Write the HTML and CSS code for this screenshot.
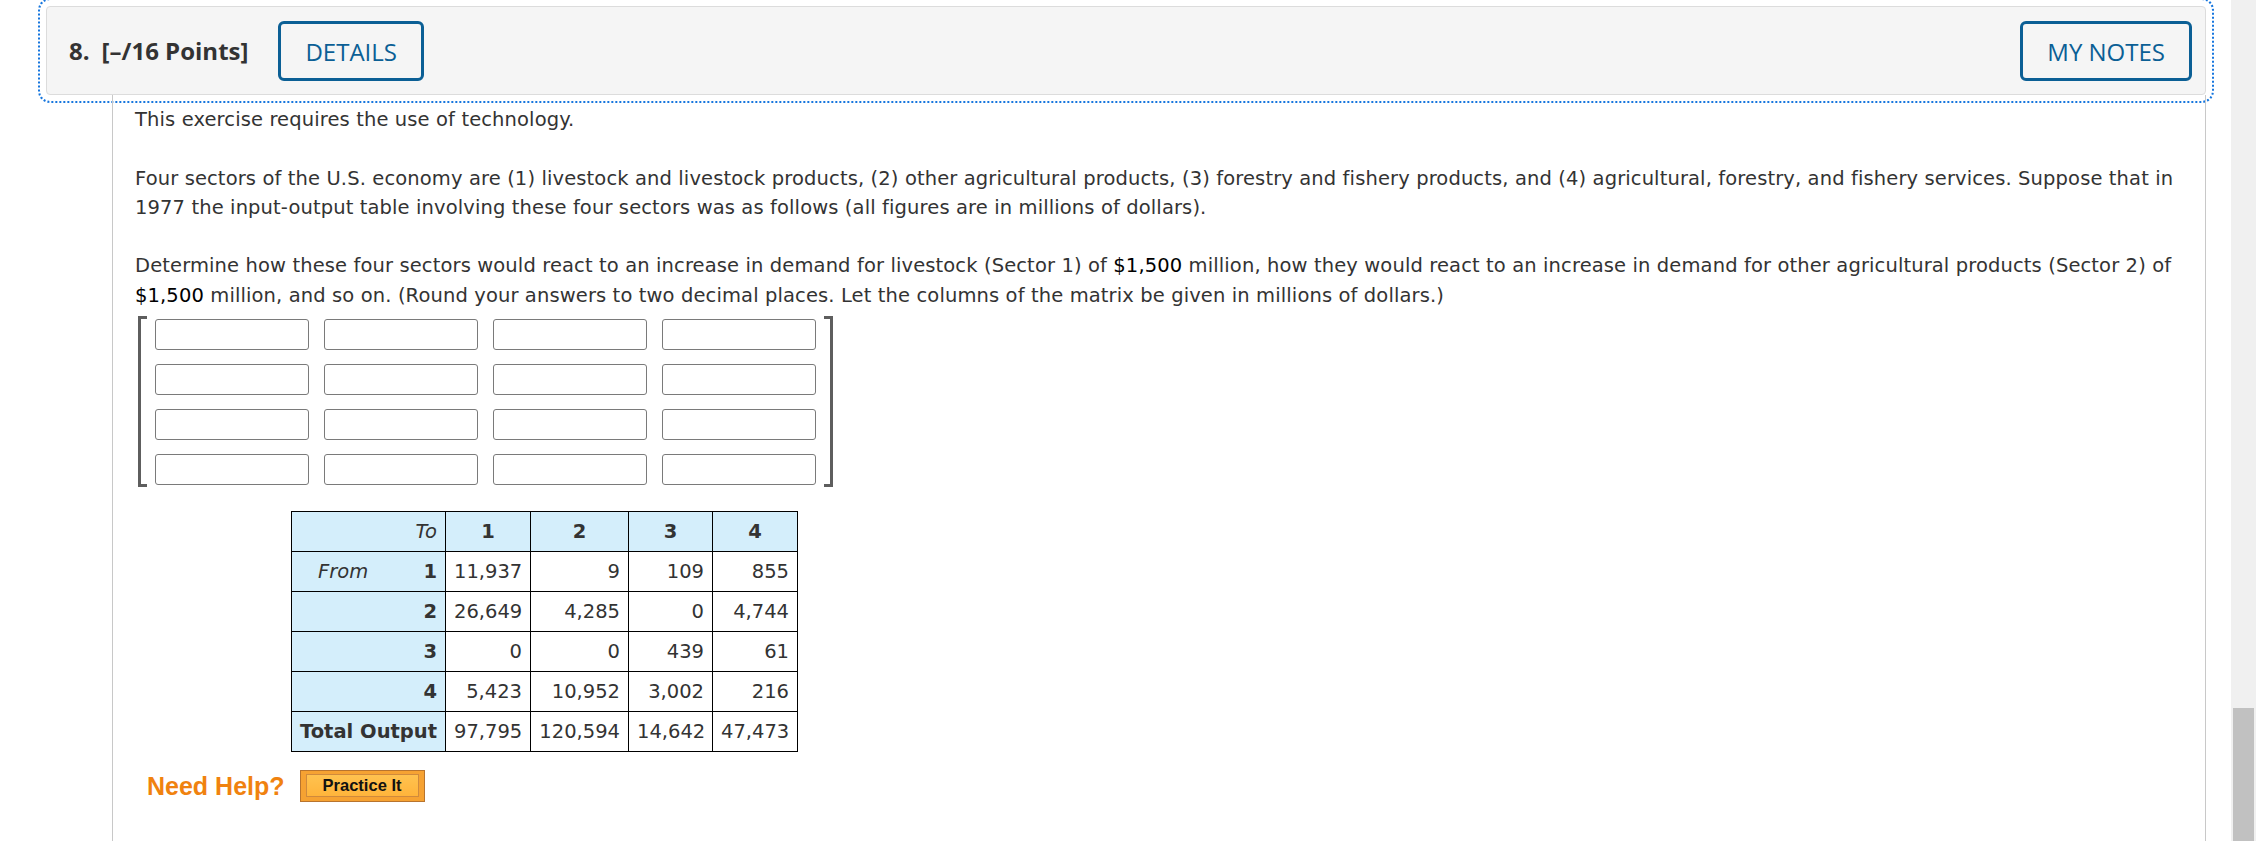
FILE: index.html
```html
<!DOCTYPE html>
<html>
<head>
<meta charset="utf-8">
<link rel="stylesheet" href="styles.css">
</head>
<body>
<div class="page">
  <div class="question">
    <div class="qhead">
      <span class="qnum">8.</span>
      <span class="pts">[–/16 Points]</span>
      <button class="btn details">DETAILS</button>
      <button class="btn notes">MY NOTES</button>
    </div>
    <div class="content">
      <p>This exercise requires the use of technology.</p>
      <p>Four sectors of the U.S. economy are (1) livestock and livestock products, (2) other agricultural products, (3) forestry and fishery products, and (4) agricultural, forestry, and fishery services. Suppose that in 1977 the input-output table involving these four sectors was as follows (all figures are in millions of dollars).</p>
      <p class="last">Determine how these four sectors would react to an increase in demand for livestock (Sector 1) of <span class="m">$1,500</span> million, how they would react to an increase in demand for other agricultural products (Sector 2) of <span class="m">$1,500</span> million, and so on. (Round your answers to two decimal places. Let the columns of the matrix be given in millions of dollars.)</p>
      <div class="matrix">
        <div class="br l"></div>
        <div class="cells">
          <input type="text"><input type="text"><input type="text"><input type="text">
          <input type="text"><input type="text"><input type="text"><input type="text">
          <input type="text"><input type="text"><input type="text"><input type="text">
          <input type="text"><input type="text"><input type="text"><input type="text">
        </div>
        <div class="br r"></div>
      </div>
      <table class="io">
        <colgroup><col class="c0"><col class="c1"><col class="c2"><col class="c3"><col class="c4"></colgroup>
        <tr class="hrow"><th class="lab to">To</th><th>1</th><th>2</th><th>3</th><th>4</th></tr>
        <tr><td class="lab"><div class="labin"><span class="from">From</span><b>1</b></div></td><td>11,937</td><td>9</td><td>109</td><td>855</td></tr>
        <tr><td class="lab"><b>2</b></td><td>26,649</td><td>4,285</td><td>0</td><td>4,744</td></tr>
        <tr><td class="lab"><b>3</b></td><td>0</td><td>0</td><td>439</td><td>61</td></tr>
        <tr><td class="lab"><b>4</b></td><td>5,423</td><td>10,952</td><td>3,002</td><td>216</td></tr>
        <tr><td class="lab"><b>Total Output</b></td><td>97,795</td><td>120,594</td><td>14,642</td><td>47,473</td></tr>
      </table>
      <div class="help">
        <span class="need">Need Help?</span>
        <span class="practice"><span class="pin">Practice It</span></span>
      </div>
      <div class="bottombox"></div>
    </div>
  </div>
</div>
<div class="sb"><div class="thumb"></div></div>
</body>
</html>
```
FILE: styles.css
```css
* { box-sizing: border-box; }
html, body { height: 100%; }
body {
  margin: 0;
  display: flex;
  height: 841px;
  overflow: hidden;
  background: #fff;
  font-family: "DejaVu Sans", Verdana, sans-serif;
  color: #333;
}
.page {
  flex: 1;
  padding: 6px 25px 0 46px;
  display: flex;
  flex-direction: column;
  min-width: 0;
}
.question {
  flex: 1;
  display: flex;
  flex-direction: column;
}
.qhead {
  height: 89px;
  flex: none;
  border: 1px solid #dcdcdc;
  border-radius: 4px;
  background: #f5f5f5;
  display: flex;
  align-items: center;
  padding: 0 13px 0 22px;
  outline: 2px dotted #1676de;
  outline-offset: 6px;
  font-family: "Open Sans", sans-serif;
  font-size: 24px;
  color: #333;
}
.qnum { font-weight: 700; }
.pts { font-weight: 700; margin-left: 12px; }
.btn {
  height: 60px;
  border: 3px solid #0b5f95;
  border-radius: 6px;
  color: #0b5f95;
  background: transparent;
  font: 400 24px "Open Sans", sans-serif;
  padding: 0 24px;
  display: flex;
  align-items: center;
  margin-top: 1px;
}
.details { margin-left: 30px; }
.notes { margin-left: auto; }

.content {
  flex: 1;
  margin-left: 66px;
  border-left: 1px solid #c8c8c8;
  border-right: 1px solid #c8c8c8;
  padding: 10px 20px 0 22px;
  font-size: 19.5px;
  line-height: 29.25px;
  letter-spacing: 0.12px;
  display: flex;
  flex-direction: column;
  align-items: flex-start;
}
.content p { margin: 0 0 29.25px; }
.content p.last { margin: 0; }
.m { color: #000; }

.matrix {
  display: flex;
  margin: 6px 0 0 3px;
}
.br {
  width: 9px;
  border: 3px solid #5e5e5e;
}
.br.l { border-right: none; }
.br.r { border-left: none; }
.cells {
  display: grid;
  grid-template-columns: repeat(4, 154px);
  column-gap: 15px;
  row-gap: 14px;
  padding: 3px 8px 2px;
}
.cells input {
  height: 31px;
  width: 154px;
  border: 1px solid #7a7a7a;
  border-radius: 3px;
  background: #fff;
  margin: 0;
  padding: 0;
}

.io {
  margin: 24px 0 0 156px;
  border-collapse: collapse;
  table-layout: fixed;
  width: 507px;
  font-size: 19.5px;
  letter-spacing: 0;
  color: #333;
}
.io col.c0 { width: 154px; }
.io col.c1 { width: 85px; }
.io col.c2 { width: 98px; }
.io col.c3 { width: 84px; }
.io col.c4 { width: 85px; }
.io th, .io td {
  border: 1px solid #000;
  height: 40px;
  padding: 0 8px;
  text-align: right;
  vertical-align: middle;
  white-space: nowrap;
}
.io th { font-weight: 700; text-align: center; background: #d4eefb; }
.io th.to { font-weight: 400; font-style: italic; text-align: right; }
.io td.lab { background: #d4eefb; }
.labin {
  display: flex;
  justify-content: space-between;
  padding-left: 18px;
}
.from { font-style: italic; }

.help {
  display: flex;
  align-items: center;
  margin: 18px 0 0 12px;
  letter-spacing: 0;
}
.need {
  font-family: "Liberation Sans", Arial, sans-serif;
  font-weight: 700;
  font-size: 25px;
  color: #f0820f;
  line-height: 30px;
}
.practice {
  margin-left: 15px;
  border: 1px solid #b8742e;
  background: #f6a232;
  padding: 3px 5px 4px;
  display: flex;
}
.pin {
  width: 113px;
  height: 23px;
  border: 1px solid #d08a3c;
  background: linear-gradient(#ffc24f, #ffb43b);
  font-family: "Liberation Sans", Arial, sans-serif;
  font-weight: 700;
  font-size: 16.5px;
  line-height: 21px;
  color: #111;
  text-align: center;
}
.bottombox {
  align-self: stretch;
  margin: 39px 0 0 167px;
  border-top: 1px solid #d0d0d0;
  height: 10px;
}

.sb {
  width: 25px;
  flex: none;
  background: #f0f0f0;
  display: flex;
  flex-direction: column;
  justify-content: flex-end;
  padding: 0 2px;
}
.thumb { height: 133px; background: #c1c1c1; }
```
